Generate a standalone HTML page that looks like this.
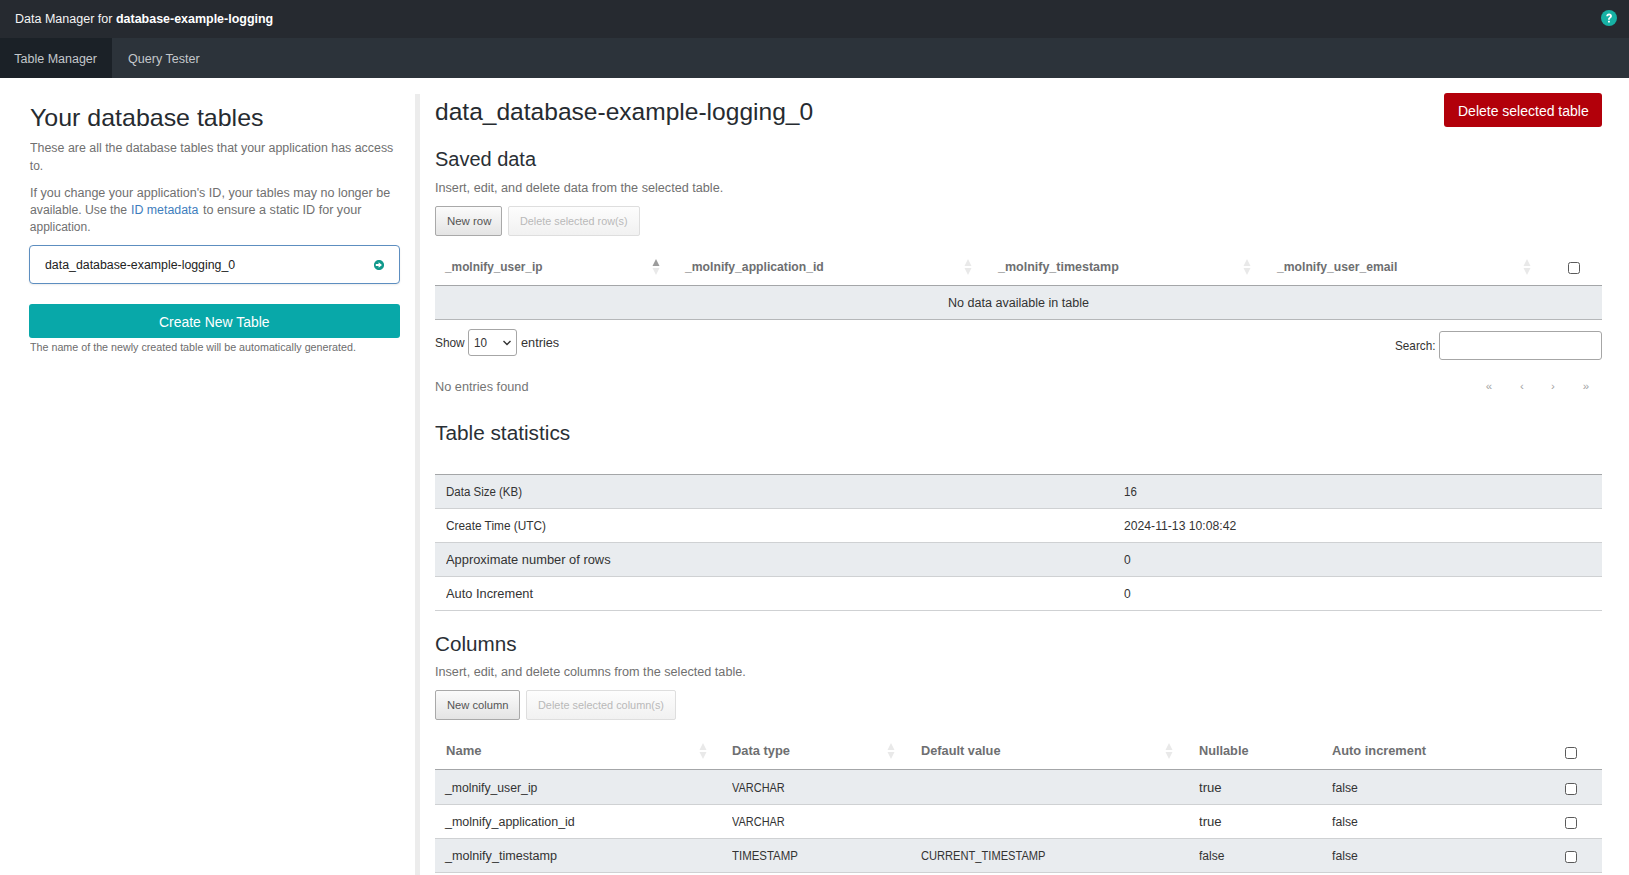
<!DOCTYPE html><html><head><meta charset="utf-8"><style>
html,body{margin:0;padding:0;width:1629px;height:875px;overflow:hidden;background:#fff;position:relative;font-family:"Liberation Sans",sans-serif}
.r{position:absolute;box-sizing:border-box}
.t{position:absolute;white-space:pre;line-height:1}
</style></head><body>
<div class="r" style="left:0px;top:0px;width:1629px;height:38px;background:#262a30"></div>
<div class="r" style="left:0px;top:38px;width:1629px;height:40px;background:#2c333a"></div>
<div class="r" style="left:0px;top:38px;width:112px;height:40px;background:#1b2127"></div>
<div class="r" style="left:415px;top:94px;width:5px;height:781px;background:#ececec"></div>
<div class="r" style="left:29px;top:245px;width:371px;height:39px;border:1px solid #5d8ec0;border-radius:4px;background:#fff;box-shadow:0 1px 2px rgba(0,0,0,.08)"></div>
<div class="r" style="left:29px;top:304px;width:371px;height:34px;background:#08a8a9;border-radius:3px"></div>
<div class="r" style="left:1444px;top:93px;width:158px;height:34px;background:#b2000a;border-radius:3px"></div>
<div class="r" style="left:435px;top:206px;width:67px;height:30px;border:1px solid #a9a9a9;border-radius:2px;background:linear-gradient(#fbfbfb,#e4e4e4)"></div>
<div class="r" style="left:508px;top:206px;width:132px;height:30px;border:1px solid #dedede;border-radius:2px;background:linear-gradient(#fdfdfd,#f1f1f1)"></div>
<div class="r" style="left:1568px;top:262px;width:12px;height:12px;border:1px solid #5a5a5a;border-radius:2.5px;background:#fff"></div>
<div class="r" style="left:435px;top:285px;width:1167px;height:1px;background:#a4a6a8"></div>
<div class="r" style="left:435px;top:286px;width:1167px;height:33px;background:#e9ecef"></div>
<div class="r" style="left:435px;top:319px;width:1167px;height:1px;background:#b5b7b9"></div>
<div class="r" style="left:468px;top:329px;width:49px;height:27px;border:1px solid #a6a6a6;border-radius:3px;background:#fff"></div>
<div class="r" style="left:1439px;top:331px;width:163px;height:29px;border:1px solid #a6a6a6;border-radius:3px;background:#fff"></div>
<div class="r" style="left:435px;top:474px;width:1167px;height:1px;background:#a4a6a8"></div>
<div class="r" style="left:435px;top:475px;width:1167px;height:33px;background:#e9ecef"></div>
<div class="r" style="left:435px;top:508px;width:1167px;height:1px;background:#cfd1d3"></div>
<div class="r" style="left:435px;top:542px;width:1167px;height:1px;background:#cfd1d3"></div>
<div class="r" style="left:435px;top:543px;width:1167px;height:33px;background:#e9ecef"></div>
<div class="r" style="left:435px;top:576px;width:1167px;height:1px;background:#cfd1d3"></div>
<div class="r" style="left:435px;top:610px;width:1167px;height:1px;background:#cfd1d3"></div>
<div class="r" style="left:435px;top:690px;width:85px;height:30px;border:1px solid #a9a9a9;border-radius:2px;background:linear-gradient(#fbfbfb,#e4e4e4)"></div>
<div class="r" style="left:526px;top:690px;width:150px;height:30px;border:1px solid #dedede;border-radius:2px;background:linear-gradient(#fdfdfd,#f1f1f1)"></div>
<div class="r" style="left:1565px;top:747px;width:12px;height:12px;border:1px solid #5a5a5a;border-radius:2.5px;background:#fff"></div>
<div class="r" style="left:435px;top:769px;width:1167px;height:1px;background:#a4a6a8"></div>
<div class="r" style="left:435px;top:770px;width:1167px;height:34px;background:#e9ecef"></div>
<div class="r" style="left:435px;top:838px;width:1167px;height:34px;background:#e9ecef"></div>
<div class="r" style="left:435px;top:804px;width:1167px;height:1px;background:#cfd1d3"></div>
<div class="r" style="left:435px;top:838px;width:1167px;height:1px;background:#cfd1d3"></div>
<div class="r" style="left:435px;top:872px;width:1167px;height:1px;background:#cfd1d3"></div>
<div class="r" style="left:1565px;top:783px;width:12px;height:12px;border:1px solid #5a5a5a;border-radius:2.5px;background:#fff"></div>
<div class="r" style="left:1565px;top:817px;width:12px;height:12px;border:1px solid #5a5a5a;border-radius:2.5px;background:#fff"></div>
<div class="r" style="left:1565px;top:851px;width:12px;height:12px;border:1px solid #5a5a5a;border-radius:2.5px;background:#fff"></div>
<svg style="position:absolute;left:1601px;top:10px" width="16" height="16" viewBox="0 0 16 16"><circle cx="8" cy="8" r="8" fill="#17b1a4"/><path d="M5.3 6.3C5.3 4.6 6.4 3.6 8.1 3.6 9.8 3.6 10.9 4.6 10.9 6 10.9 7.2 10.2 7.8 9.3 8.4 8.8 8.7 8.9 9.1 8.9 9.8H7C7 8.7 7.2 8.1 8 7.5 8.7 7 9 6.7 9 6.1 9 5.5 8.6 5.2 8.1 5.2 7.5 5.2 7.2 5.6 7.2 6.3ZM7 10.7H8.9V12.6H7Z" fill="#fff"/></svg>
<svg style="position:absolute;left:374px;top:260px" width="10" height="10" viewBox="0 0 10 10"><circle cx="5" cy="5" r="5.1" fill="#11998c"/><path d="M1.8 4.1H4.6V2.2L8 5 4.6 7.8V5.9H1.8Z" fill="#fff"/></svg>
<svg style="position:absolute;left:651px;top:257px" width="10" height="19" viewBox="0 0 10 19"><path d="M5 2L8.5 9H1.5Z" fill="#9c9c9c"/><path d="M5 18L8.5 11H1.5Z" fill="#e9e9e9"/></svg>
<svg style="position:absolute;left:963px;top:257px" width="10" height="19" viewBox="0 0 10 19"><path d="M5 2L8.5 9H1.5Z" fill="#e9e9e9"/><path d="M5 18L8.5 11H1.5Z" fill="#e9e9e9"/></svg>
<svg style="position:absolute;left:1242px;top:257px" width="10" height="19" viewBox="0 0 10 19"><path d="M5 2L8.5 9H1.5Z" fill="#e9e9e9"/><path d="M5 18L8.5 11H1.5Z" fill="#e9e9e9"/></svg>
<svg style="position:absolute;left:1522px;top:257px" width="10" height="19" viewBox="0 0 10 19"><path d="M5 2L8.5 9H1.5Z" fill="#e9e9e9"/><path d="M5 18L8.5 11H1.5Z" fill="#e9e9e9"/></svg>
<svg style="position:absolute;left:502px;top:339px" width="10" height="8" viewBox="0 0 10 8"><path d="M1.5 2L5 5.5 8.5 2" fill="none" stroke="#333" stroke-width="1.4"/></svg>
<div class="t" style="left:1479px;top:381px;width:20px;text-align:center;font-size:11.5px;color:#a3a3a3">&laquo;</div>
<div class="t" style="left:1512px;top:381px;width:20px;text-align:center;font-size:11.5px;color:#a3a3a3">&lsaquo;</div>
<div class="t" style="left:1543px;top:381px;width:20px;text-align:center;font-size:11.5px;color:#a3a3a3">&rsaquo;</div>
<div class="t" style="left:1576px;top:381px;width:20px;text-align:center;font-size:11.5px;color:#a3a3a3">&raquo;</div>
<svg style="position:absolute;left:698px;top:741px" width="10" height="19" viewBox="0 0 10 19"><path d="M5 2L8.5 9H1.5Z" fill="#e9e9e9"/><path d="M5 18L8.5 11H1.5Z" fill="#e9e9e9"/></svg>
<svg style="position:absolute;left:886px;top:741px" width="10" height="19" viewBox="0 0 10 19"><path d="M5 2L8.5 9H1.5Z" fill="#e9e9e9"/><path d="M5 18L8.5 11H1.5Z" fill="#e9e9e9"/></svg>
<svg style="position:absolute;left:1164px;top:741px" width="10" height="19" viewBox="0 0 10 19"><path d="M5 2L8.5 9H1.5Z" fill="#e9e9e9"/><path d="M5 18L8.5 11H1.5Z" fill="#e9e9e9"/></svg>
<div class="t" id="t0" style="left:14.6px;top:13px;font-size:12.3px;color:#f4f4f4;font-weight:400;transform:scaleX(1.0177);transform-origin:0 0;">Data Manager for</div>
<div class="t" id="t1" style="left:116px;top:13px;font-size:12.3px;color:#ffffff;font-weight:700;transform:scaleX(1.0134);transform-origin:0 0;">database-example-logging</div>
<div class="t" id="t2" style="left:14.3px;top:53px;font-size:12.5px;color:#c3c7cb;font-weight:400;transform:scaleX(1.0000);transform-origin:0 0;">Table Manager</div>
<div class="t" id="t3" style="left:127.8px;top:53px;font-size:12.5px;color:#c3c7cb;font-weight:400;transform:scaleX(1.0038);transform-origin:0 0;">Query Tester</div>
<div class="t" id="t4" style="left:30px;top:107px;font-size:23.4px;color:#262b30;font-weight:400;transform:scaleX(1.0666);transform-origin:0 0;">Your database tables</div>
<div class="t" id="t5" style="left:29.8px;top:142px;font-size:12px;color:#707070;font-weight:400;transform:scaleX(1.0334);transform-origin:0 0;">These are all the database tables that your application has access</div>
<div class="t" id="t6" style="left:29.8px;top:160px;font-size:12px;color:#707070;font-weight:400;">to.</div>
<div class="t" id="t7" style="left:29.8px;top:187px;font-size:12px;color:#707070;font-weight:400;transform:scaleX(1.0456);transform-origin:0 0;">If you change your application's ID, your tables may no longer be</div>
<div class="t" id="t8" style="left:29.8px;top:204px;font-size:12px;color:#707070;font-weight:400;transform:scaleX(1.0179);transform-origin:0 0;">available. Use the</div>
<div class="t" id="t9" style="left:130.9px;top:204px;font-size:12px;color:#3d7dbd;font-weight:400;transform:scaleX(1.0310);transform-origin:0 0;">ID metadata</div>
<div class="t" id="t10" style="left:202.8px;top:204px;font-size:12px;color:#707070;font-weight:400;transform:scaleX(1.0509);transform-origin:0 0;">to ensure a static ID for your</div>
<div class="t" id="t11" style="left:29.8px;top:221px;font-size:12px;color:#707070;font-weight:400;">application.</div>
<div class="t" id="t12" style="left:45.3px;top:259px;font-size:12px;color:#222;font-weight:400;transform:scaleX(1.0292);transform-origin:0 0;">data_database-example-logging_0</div>
<div class="t" id="t13" style="left:159.3px;top:315px;font-size:14px;color:#ffffff;font-weight:400;transform:scaleX(0.9952);transform-origin:0 0;">Create New Table</div>
<div class="t" id="t14" style="left:29.5px;top:343px;font-size:10px;color:#6d6d6d;font-weight:400;transform:scaleX(1.0718);transform-origin:0 0;">The name of the newly created table will be automatically generated.</div>
<div class="t" id="t15" style="left:435.4px;top:100px;font-size:24.5px;color:#262b30;font-weight:400;transform:scaleX(1.0021);transform-origin:0 0;">data_database-example-logging_0</div>
<div class="t" id="t16" style="left:1457.9px;top:105px;font-size:13.8px;color:#ffffff;font-weight:400;transform:scaleX(1.0143);transform-origin:0 0;">Delete selected table</div>
<div class="t" id="t17" style="left:435.3px;top:149px;font-size:20px;color:#2a2f35;font-weight:400;transform:scaleX(0.9980);transform-origin:0 0;">Saved data</div>
<div class="t" id="t18" style="left:435.3px;top:182px;font-size:12px;color:#707070;font-weight:400;transform:scaleX(1.0537);transform-origin:0 0;">Insert, edit, and delete data from the selected table.</div>
<div class="t" id="t19" style="left:446.5px;top:216px;font-size:11.2px;color:#555;font-weight:400;transform:scaleX(1.0226);transform-origin:0 0;">New row</div>
<div class="t" id="t20" style="left:520.3px;top:216px;font-size:11.2px;color:#b9b9b9;font-weight:400;transform:scaleX(0.9668);transform-origin:0 0;">Delete selected row(s)</div>
<div class="t" id="t21" style="left:445.3px;top:261px;font-size:12px;color:#6e6f71;font-weight:700;transform:scaleX(0.9878);transform-origin:0 0;">_molnify_user_ip</div>
<div class="t" id="t22" style="left:685.4px;top:261px;font-size:12px;color:#6e6f71;font-weight:700;transform:scaleX(1.0153);transform-origin:0 0;">_molnify_application_id</div>
<div class="t" id="t23" style="left:997.5px;top:261px;font-size:12px;color:#6e6f71;font-weight:700;transform:scaleX(1.0410);transform-origin:0 0;">_molnify_timestamp</div>
<div class="t" id="t24" style="left:1277.4px;top:261px;font-size:12px;color:#6e6f71;font-weight:700;transform:scaleX(1.0132);transform-origin:0 0;">_molnify_user_email</div>
<div class="t" id="t25" style="left:948.2px;top:297px;font-size:12px;color:#333;font-weight:400;transform:scaleX(1.0455);transform-origin:0 0;">No data available in table</div>
<div class="t" id="t26" style="left:435.3px;top:337px;font-size:12.8px;color:#333;font-weight:400;transform:scaleX(0.9277);transform-origin:0 0;">Show</div>
<div class="t" id="t27" style="left:474px;top:337px;font-size:12.8px;color:#333;font-weight:400;transform:scaleX(0.9133);transform-origin:0 0;">10</div>
<div class="t" id="t28" style="left:520.8px;top:337px;font-size:12.8px;color:#333;font-weight:400;transform:scaleX(0.9942);transform-origin:0 0;">entries</div>
<div class="t" id="t29" style="left:1394.5px;top:340px;font-size:12.8px;color:#333;font-weight:400;transform:scaleX(0.9182);transform-origin:0 0;">Search:</div>
<div class="t" id="t30" style="left:435.3px;top:381px;font-size:12px;color:#757575;font-weight:400;transform:scaleX(1.0617);transform-origin:0 0;">No entries found</div>
<div class="t" id="t31" style="left:435.3px;top:423px;font-size:20px;color:#2a2f35;font-weight:400;transform:scaleX(1.0395);transform-origin:0 0;">Table statistics</div>
<div class="t" id="t32" style="left:445.6px;top:486px;font-size:12px;color:#333;font-weight:400;transform:scaleX(0.9577);transform-origin:0 0;">Data Size (KB)</div>
<div class="t" id="t33" style="left:1124px;top:486px;font-size:12px;color:#333;font-weight:400;transform:scaleX(0.9581);transform-origin:0 0;">16</div>
<div class="t" id="t34" style="left:445.6px;top:520px;font-size:12px;color:#333;font-weight:400;transform:scaleX(0.9867);transform-origin:0 0;">Create Time (UTC)</div>
<div class="t" id="t35" style="left:1124px;top:520px;font-size:12px;color:#333;font-weight:400;transform:scaleX(1.0150);transform-origin:0 0;">2024-11-13 10:08:42</div>
<div class="t" id="t36" style="left:445.6px;top:554px;font-size:12px;color:#333;font-weight:400;transform:scaleX(1.0730);transform-origin:0 0;">Approximate number of rows</div>
<div class="t" id="t37" style="left:1124px;top:554px;font-size:12px;color:#333;font-weight:400;">0</div>
<div class="t" id="t38" style="left:445.6px;top:588px;font-size:12px;color:#333;font-weight:400;transform:scaleX(1.0691);transform-origin:0 0;">Auto Increment</div>
<div class="t" id="t39" style="left:1124px;top:588px;font-size:12px;color:#333;font-weight:400;">0</div>
<div class="t" id="t40" style="left:435.3px;top:634px;font-size:20px;color:#2a2f35;font-weight:400;transform:scaleX(1.0327);transform-origin:0 0;">Columns</div>
<div class="t" id="t41" style="left:435.3px;top:666px;font-size:12px;color:#707070;font-weight:400;transform:scaleX(1.0541);transform-origin:0 0;">Insert, edit, and delete columns from the selected table.</div>
<div class="t" id="t42" style="left:446.8px;top:700px;font-size:11.2px;color:#555;font-weight:400;transform:scaleX(0.9990);transform-origin:0 0;">New column</div>
<div class="t" id="t43" style="left:538px;top:700px;font-size:11.2px;color:#b9b9b9;font-weight:400;transform:scaleX(0.9741);transform-origin:0 0;">Delete selected column(s)</div>
<div class="t" id="t44" style="left:445.8px;top:745px;font-size:12px;color:#6e6f71;font-weight:700;transform:scaleX(1.0860);transform-origin:0 0;">Name</div>
<div class="t" id="t45" style="left:732.4px;top:745px;font-size:12px;color:#6e6f71;font-weight:700;transform:scaleX(1.0735);transform-origin:0 0;">Data type</div>
<div class="t" id="t46" style="left:920.5px;top:745px;font-size:12px;color:#6e6f71;font-weight:700;transform:scaleX(1.0642);transform-origin:0 0;">Default value</div>
<div class="t" id="t47" style="left:1198.5px;top:745px;font-size:12px;color:#6e6f71;font-weight:700;transform:scaleX(1.0602);transform-origin:0 0;">Nullable</div>
<div class="t" id="t48" style="left:1332.4px;top:745px;font-size:12px;color:#6e6f71;font-weight:700;transform:scaleX(1.0680);transform-origin:0 0;">Auto increment</div>
<div class="t" id="t49" style="left:445px;top:782px;font-size:12px;color:#333;font-weight:400;transform:scaleX(1.0185);transform-origin:0 0;">_molnify_user_ip</div>
<div class="t" id="t50" style="left:732.4px;top:782px;font-size:12px;color:#333;font-weight:400;transform:scaleX(0.9135);transform-origin:0 0;">VARCHAR</div>
<div class="t" id="t51" style="left:1198.5px;top:782px;font-size:12px;color:#333;font-weight:400;transform:scaleX(1.0924);transform-origin:0 0;">true</div>
<div class="t" id="t52" style="left:1332.4px;top:782px;font-size:12px;color:#333;font-weight:400;transform:scaleX(1.0174);transform-origin:0 0;">false</div>
<div class="t" id="t53" style="left:445px;top:816px;font-size:12px;color:#333;font-weight:400;transform:scaleX(1.0405);transform-origin:0 0;">_molnify_application_id</div>
<div class="t" id="t54" style="left:732.4px;top:816px;font-size:12px;color:#333;font-weight:400;transform:scaleX(0.9135);transform-origin:0 0;">VARCHAR</div>
<div class="t" id="t55" style="left:1198.5px;top:816px;font-size:12px;color:#333;font-weight:400;transform:scaleX(1.0924);transform-origin:0 0;">true</div>
<div class="t" id="t56" style="left:1332.4px;top:816px;font-size:12px;color:#333;font-weight:400;transform:scaleX(1.0174);transform-origin:0 0;">false</div>
<div class="t" id="t57" style="left:445px;top:850px;font-size:12px;color:#333;font-weight:400;transform:scaleX(1.0495);transform-origin:0 0;">_molnify_timestamp</div>
<div class="t" id="t58" style="left:732.4px;top:850px;font-size:12px;color:#333;font-weight:400;transform:scaleX(0.9533);transform-origin:0 0;">TIMESTAMP</div>
<div class="t" id="t59" style="left:920.5px;top:850px;font-size:12px;color:#333;font-weight:400;transform:scaleX(0.9260);transform-origin:0 0;">CURRENT_TIMESTAMP</div>
<div class="t" id="t60" style="left:1198.5px;top:850px;font-size:12px;color:#333;font-weight:400;transform:scaleX(1.0055);transform-origin:0 0;">false</div>
<div class="t" id="t61" style="left:1332.4px;top:850px;font-size:12px;color:#333;font-weight:400;transform:scaleX(1.0174);transform-origin:0 0;">false</div>
</body></html>
